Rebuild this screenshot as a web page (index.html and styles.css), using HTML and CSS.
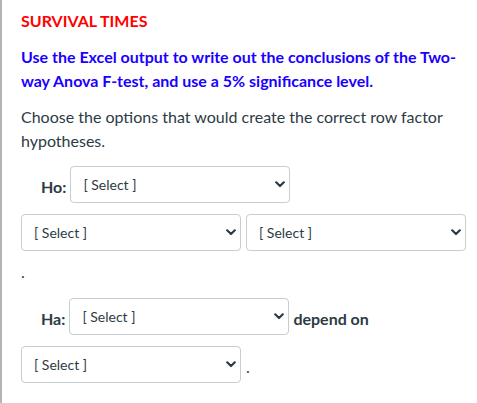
FILE: index.html
```html
<!DOCTYPE html>
<html>
<head>
<meta charset="utf-8">
<link rel="stylesheet" href="styles.css">
</head>
<body>
<div class="question">
  <p class="title">SURVIVAL TIMES</p>
  <p class="lead">Use the Excel output to write out the conclusions of the Two-way Anova F-test, and use a 5% significance level.</p>
  <p class="body">Choose the options that would create the correct row factor hypotheses.</p>
  <div class="row row-first row-indent">
    <span class="label">Ho:</span>
    <select class="dd"><option>[ Select ]</option></select>
  </div>
  <div class="row row-next">
    <select class="dd"><option>[ Select ]</option></select>
    <select class="dd"><option>[ Select ]</option></select>
  </div>
  <div class="row row-dot">
    <span class="label plain">.</span>
  </div>
  <div class="row row-ha row-indent">
    <span class="label">Ha:</span>
    <select class="dd"><option>[ Select ]</option></select>
    <span class="label">depend on</span>
  </div>
  <div class="row row-next">
    <select class="dd"><option>[ Select ]</option></select>
    <span class="label plain">.</span>
  </div>
</div>
</body>
</html>
```
FILE: styles.css
```css
html, body {
  margin: 0;
  padding: 0;
  background: #ffffff;
}

body {
  font-family: Lato, "Open Sans", sans-serif;
  color: #2d3b45;
  font-size: 16px;
  line-height: 24px;
}

.question {
  border-left: 2px solid #b4b4b4;
  padding: 9px 10px 20px 19px;
  min-height: 374px;
}

.question p {
  margin: 0;
}

.title {
  color: #ff0000;
  font-weight: 700;
}

.lead {
  margin-top: 12px !important;
  color: #1a00ff;
  font-weight: 700;
}

.body {
  margin-top: 12px !important;
  color: #2d3b45;
}

.row {
  display: flex;
  align-items: flex-start;
  gap: 4px;
}

.row-indent {
  padding-left: 20px;
}

.row-first {
  margin-top: 13px;
}

.row-next {
  margin-top: 11px;
  gap: 5px;
}

.row-dot {
  margin-top: 9px;
}

.row-ha {
  margin-top: 14px;
}

.label {
  margin-top: 9px;
  font-weight: 700;
  line-height: 24px;
  white-space: nowrap;
}

.row-dot .label {
  margin-top: 0;
}

.plain {
  font-weight: 400;
}

.dd {
  -webkit-appearance: none;
  appearance: none;
  box-sizing: border-box;
  width: 220px;
  height: 37px;
  margin: 0;
  padding: 0 24px 0 12px;
  border: 1px solid #c7cdd1;
  border-radius: 4px;
  font-family: Lato, "Open Sans", sans-serif;
  font-size: 14px;
  color: #2d3b45;
  background-color: #ffffff;
  background-image: url("data:image/svg+xml;utf8,<svg xmlns='http://www.w3.org/2000/svg' width='10' height='7' viewBox='0 0 10 7'><polyline points='1.2,1.3 5,5 8.8,1.3' fill='none' stroke='%232d3b45' stroke-width='2.2' stroke-linecap='round' stroke-linejoin='round'/></svg>");
  background-repeat: no-repeat;
  background-position: right 4px center;
  background-size: 10px 7px;
}
```
